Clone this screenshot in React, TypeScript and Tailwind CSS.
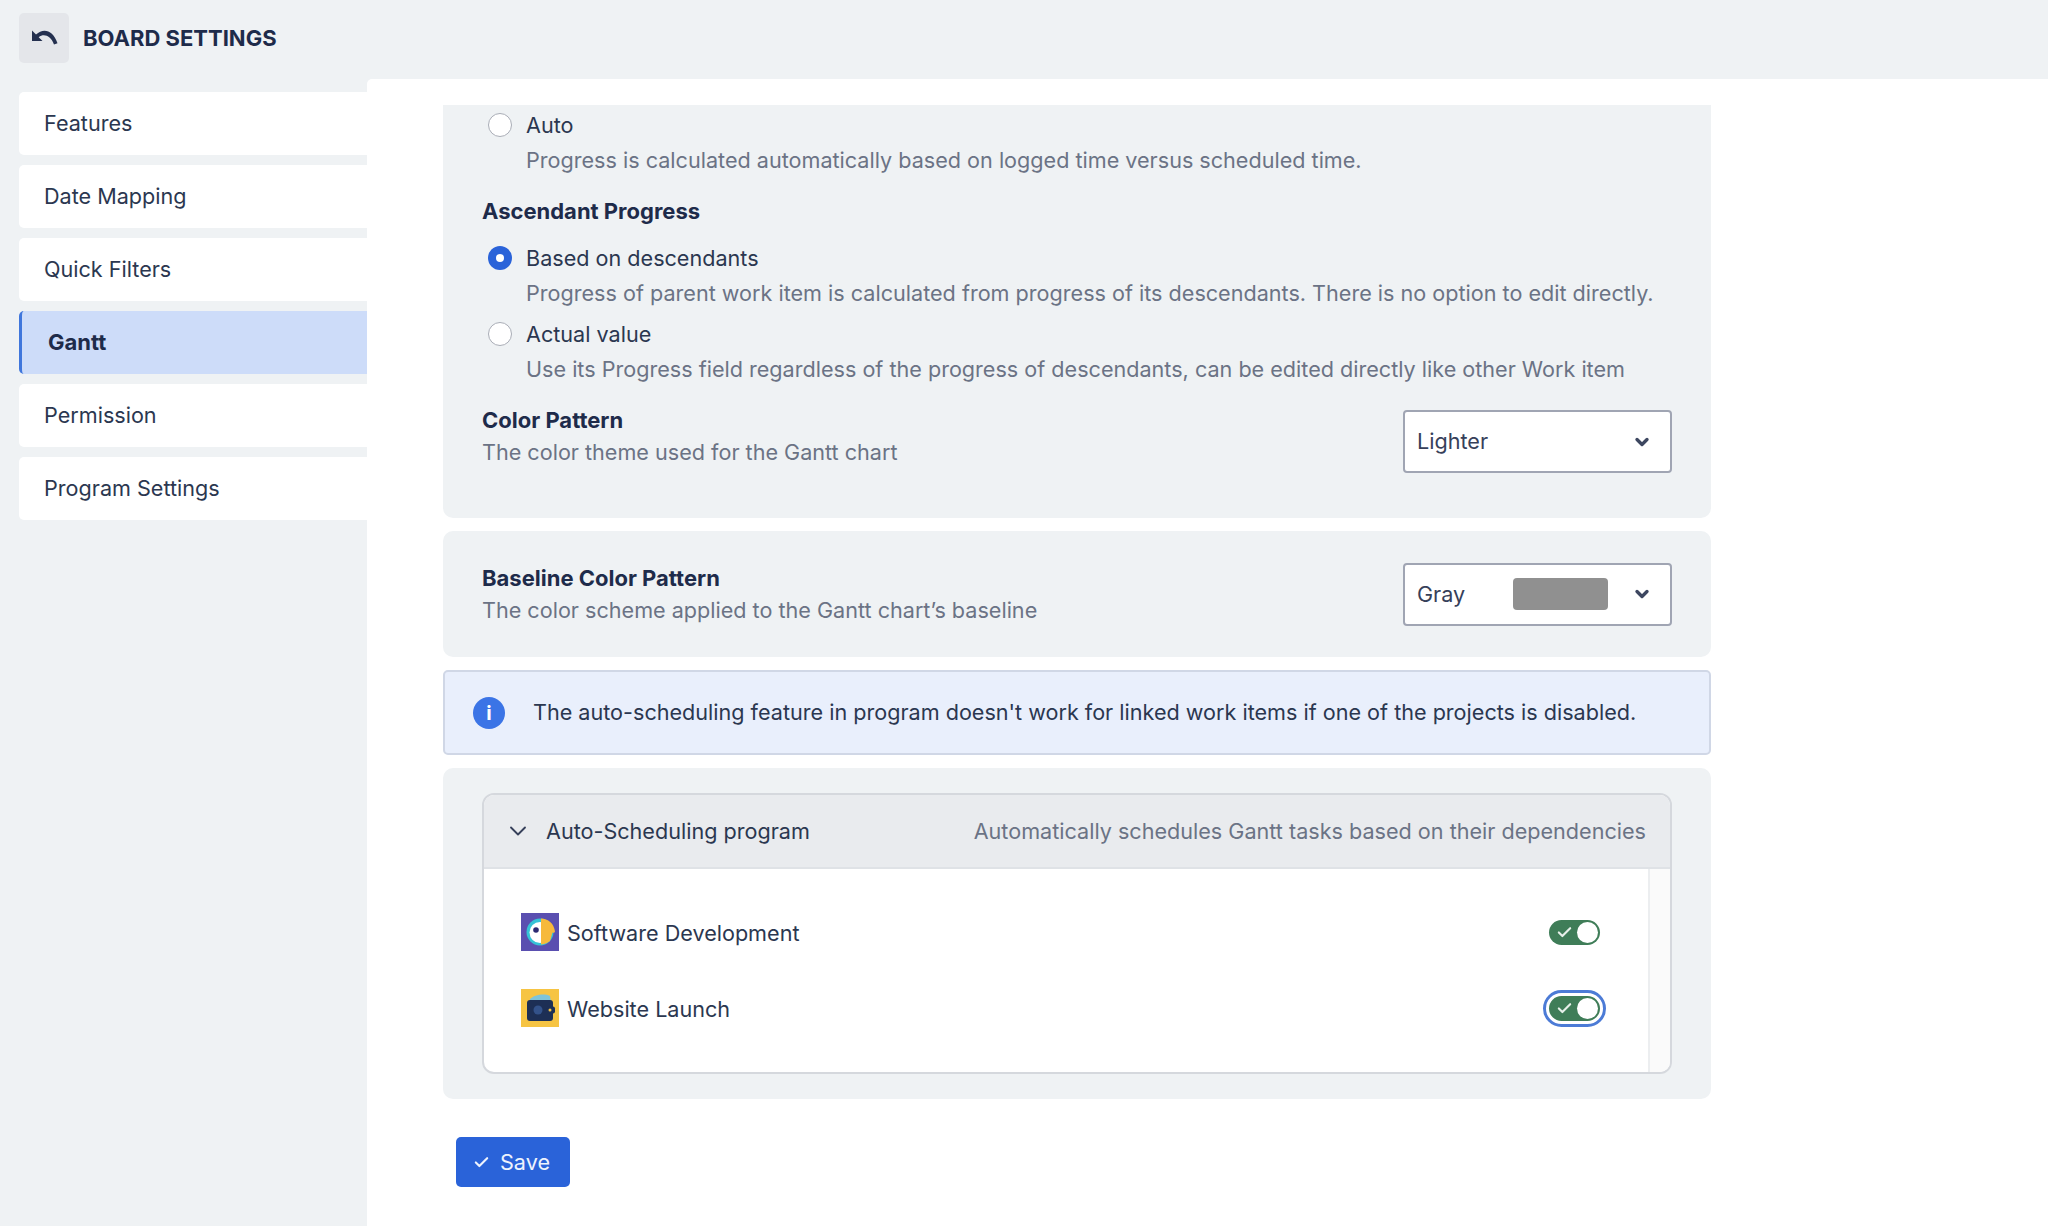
import * as React from 'react';
import { Check, ChevronDown } from 'lucide-react';

const sideItems = ['Features', 'Date Mapping', 'Quick Filters', 'Gantt', 'Permission', 'Program Settings'];

function BackIcon() {
  return (
    <svg width="27" height="18" viewBox="0 0 27 18" fill="none">
      <path d="M1 1.500V12h10.500L7.700 8.200C12.500 4.500 19.500 6 23 15.500l3.500-1.300C22 1 12.500-1.500 5 5.500L1 1.500Z" fill="#24304f" />
    </svg>
  );
}

function ParrotLogo() {
  return (
    <svg width="38" height="38" viewBox="0 0 38 38" className="shrink-0">
      <rect width="38" height="38" fill="#5a4fb0" />
      <circle cx="19" cy="19" r="13.500" fill="#35c3d6" />
      <circle cx="19" cy="19.500" r="10.500" fill="#ffffff" />
      <path d="M20 5.500c7 0 13 5 14 13-.5 1.500-1.500 1.500-2.500 1-1 3-1.500 6-2.500 8.500-1.500 1.500-5 3-9 3.500V5.500Z" fill="#f6b93b" />
      <circle cx="15" cy="17" r="2.800" fill="#2c2a72" />
    </svg>
  );
}

function WalletLogo() {
  return (
    <svg width="38" height="38" viewBox="0 0 38 38" className="shrink-0">
      <rect width="38" height="38" fill="#f6c443" />
      <path d="M9 10c4-4 14-6 20-3l1 6H9Z" fill="#7fc4d8" />
      <rect x="6" y="11" width="26" height="21" rx="3" fill="#1d2f55" />
      <circle cx="17" cy="21" r="4.500" fill="#33528a" />
      <rect x="26" y="17.500" width="8" height="7" rx="2" fill="#1d2f55" />
      <circle cx="29" cy="21" r="1.500" fill="#f6c443" />
    </svg>
  );
}

function Radio({ checked }: { checked?: boolean }) {
  return checked ? (
    <span className="flex h-[24px] w-[24px] shrink-0 items-center justify-center rounded-full bg-[#2a63d9]">
      <span className="h-[8px] w-[8px] rounded-full bg-white" />
    </span>
  ) : (
    <span className="h-[24px] w-[24px] shrink-0 rounded-full border border-[#a9adb6] bg-white" />
  );
}

function RadioOption({ label, desc, checked, className }: { label: string; desc: string; checked?: boolean; className?: string }) {
  return (
    <div className={className}>
      <div className="flex h-[24px] items-center gap-[14px] pl-[6px]">
        <Radio checked={checked} />
        <span className="text-[21.6px] text-[#2b3750]">{label}</span>
      </div>
      <p className="mt-[10px] h-[24px] pl-[44px] text-[21.6px] leading-[26px] text-[#6b7385]">{desc}</p>
    </div>
  );
}

function SelectBox({ label, swatch }: { label: string; swatch?: boolean }) {
  return (
    <div className="flex h-[63px] w-[269px] shrink-0 items-center rounded-[4px] border-2 border-[#a0a5b3] bg-white pl-[12px] pr-[18px]">
      <span className="w-[96px] text-[21.6px] text-[#36405a]">{label}</span>
      {swatch && <span className="h-[32px] w-[95px] rounded-[4px] bg-[#909090]" />}
      <ChevronDown size={20} strokeWidth={4} className="ml-auto text-[#3d4760]" />
    </div>
  );
}

function Toggle({ focused }: { focused?: boolean }) {
  return (
    <div className={focused ? 'rounded-full border-[3px] border-[#4c7bd6] p-[3px]' : 'p-[6px]'}>
      <div className="flex h-[25px] w-[51px] items-center justify-between rounded-full bg-[#3f7d58] pl-[7px] pr-[2px]">
        <Check size={17} strokeWidth={3} className="text-[#e6efe9]" />
        <span className="h-[21px] w-[21px] rounded-full bg-white" />
      </div>
    </div>
  );
}

export default function App() {
  return (
    <div className="flex h-[1226px] flex-col overflow-hidden bg-[#eff2f4] font-['Inter',sans-serif]">
      <header className="flex h-[79px] shrink-0 items-start gap-[14px] pl-[19px] pt-[13px]">
        <button type="button" className="flex h-[50px] w-[50px] items-center justify-center rounded-[5px] bg-[#e4e6ea]">
          <BackIcon />
        </button>
        <h1 className="mt-[9px] text-[22px] font-bold leading-[32px] text-[#1e2b4a]">BOARD SETTINGS</h1>
      </header>

      <div className="flex min-h-0 flex-1">
        <nav className="flex w-[367px] shrink-0 flex-col gap-[10px] pl-[19px] pt-[13px]">
          {sideItems.map((item) =>
            item === 'Gantt' ? (
              <div key={item} className="flex h-[63px] items-center rounded-l-[5px] border-l-[3px] border-[#3f76dc] bg-[#cddcf9] pl-[26px] text-[22px] font-bold text-[#1e2b4a]">
                {item}
              </div>
            ) : (
              <div key={item} className="flex h-[63px] items-center rounded-l-[5px] bg-white pl-[25px] text-[21.6px] text-[#2b3750]">
                {item}
              </div>
            ),
          )}
        </nav>

        <main className="flex-1 rounded-tl-[5px] bg-white pl-[76px] pt-[26px]">
          <div className="flex w-[1268px] flex-col gap-[13px]">
            <section className="h-[413px] rounded-b-[10px] bg-[#eff2f4] pl-[39px] pr-[39px] pt-[8px]">
              <RadioOption label="Auto" desc="Progress is calculated automatically based on logged time versus scheduled time." />
              <h3 className="mt-[26px] h-[28px] text-[22px] font-bold leading-[28px] text-[#1e2b4a]">Ascendant Progress</h3>
              <RadioOption className="mt-[21px]" checked label="Based on descendants" desc="Progress of parent work item is calculated from progress of its descendants. There is no option to edit directly." />
              <RadioOption className="mt-[18px]" label="Actual value" desc="Use its Progress field regardless of the progress of descendants, can be edited directly like other Work item" />
              <div className="mt-[26px] flex items-start justify-between">
                <div>
                  <h3 className="text-[22px] font-bold leading-[28px] text-[#1e2b4a]">Color Pattern</h3>
                  <p className="mt-[4px] text-[21.6px] leading-[28px] text-[#6b7385]">The color theme used for the Gantt chart</p>
                </div>
                <div className="mt-[4px]">
                  <SelectBox label="Lighter" />
                </div>
              </div>
            </section>

            <section className="flex h-[126px] items-center justify-between rounded-[10px] bg-[#eff2f4] px-[39px]">
              <div>
                <h3 className="text-[22px] font-bold leading-[28px] text-[#1e2b4a]">Baseline Color Pattern</h3>
                <p className="mt-[4px] text-[21.6px] leading-[28px] text-[#6b7385]">The color scheme applied to the Gantt chart’s baseline</p>
              </div>
              <SelectBox label="Gray" swatch />
            </section>

            <section className="flex h-[85px] items-center gap-[28px] rounded-[5px] border-2 border-[#d0d7e6] bg-[#e9effc] pl-[28px]">
              <span className="flex h-[32px] w-[32px] items-center justify-center rounded-full bg-[#3b74e6] text-[20px] font-bold text-white">i</span>
              <span className="text-[21.6px] text-[#2b3750]">The auto-scheduling feature in program doesn't work for linked work items if one of the projects is disabled.</span>
            </section>

            <section className="h-[331px] rounded-[10px] bg-[#eff2f4] px-[39px] pt-[25px]">
              <div className="h-[281px] overflow-hidden rounded-[12px] border-2 border-[#d5d8dd] bg-white">
                <div className="flex h-[74px] items-center border-b-2 border-[#dfe2e6] bg-[#e9ebee] pl-[20px] pr-[24px]">
                  <ChevronDown size={28} strokeWidth={1.6} className="text-[#36405a]" />
                  <span className="ml-[14px] text-[21.6px] text-[#2b3750]">Auto-Scheduling program</span>
                  <span className="ml-auto text-[21.6px] text-[#6b7385]">Automatically schedules Gantt tasks based on their dependencies</span>
                </div>
                <div className="flex h-[205px]">
                  <div className="flex flex-1 flex-col gap-[38px] pl-[37px] pr-[42px] pt-[44px]">
                    <div className="flex h-[38px] items-center gap-[8px]">
                      <ParrotLogo />
                      <span className="pt-[2px] text-[21.6px] text-[#2b3750]">Software Development</span>
                      <div className="ml-auto"><Toggle /></div>
                    </div>
                    <div className="flex h-[38px] items-center gap-[8px]">
                      <WalletLogo />
                      <span className="pt-[2px] text-[21.6px] text-[#2b3750]">Website Launch</span>
                      <div className="ml-auto"><Toggle focused /></div>
                    </div>
                  </div>
                  <div className="w-[22px] border-l-2 border-[#eceef0] bg-[#fafafa]" />
                </div>
              </div>
            </section>
          </div>

          <button type="button" className="ml-[13px] mt-[38px] flex h-[50px] w-[114px] items-center gap-[10px] rounded-[5px] bg-[#2a63d9] pl-[17px] text-[21.6px] text-[#eef3fd]">
            <Check size={17} strokeWidth={3} />
            Save
          </button>
        </main>
      </div>
    </div>
  );
}
